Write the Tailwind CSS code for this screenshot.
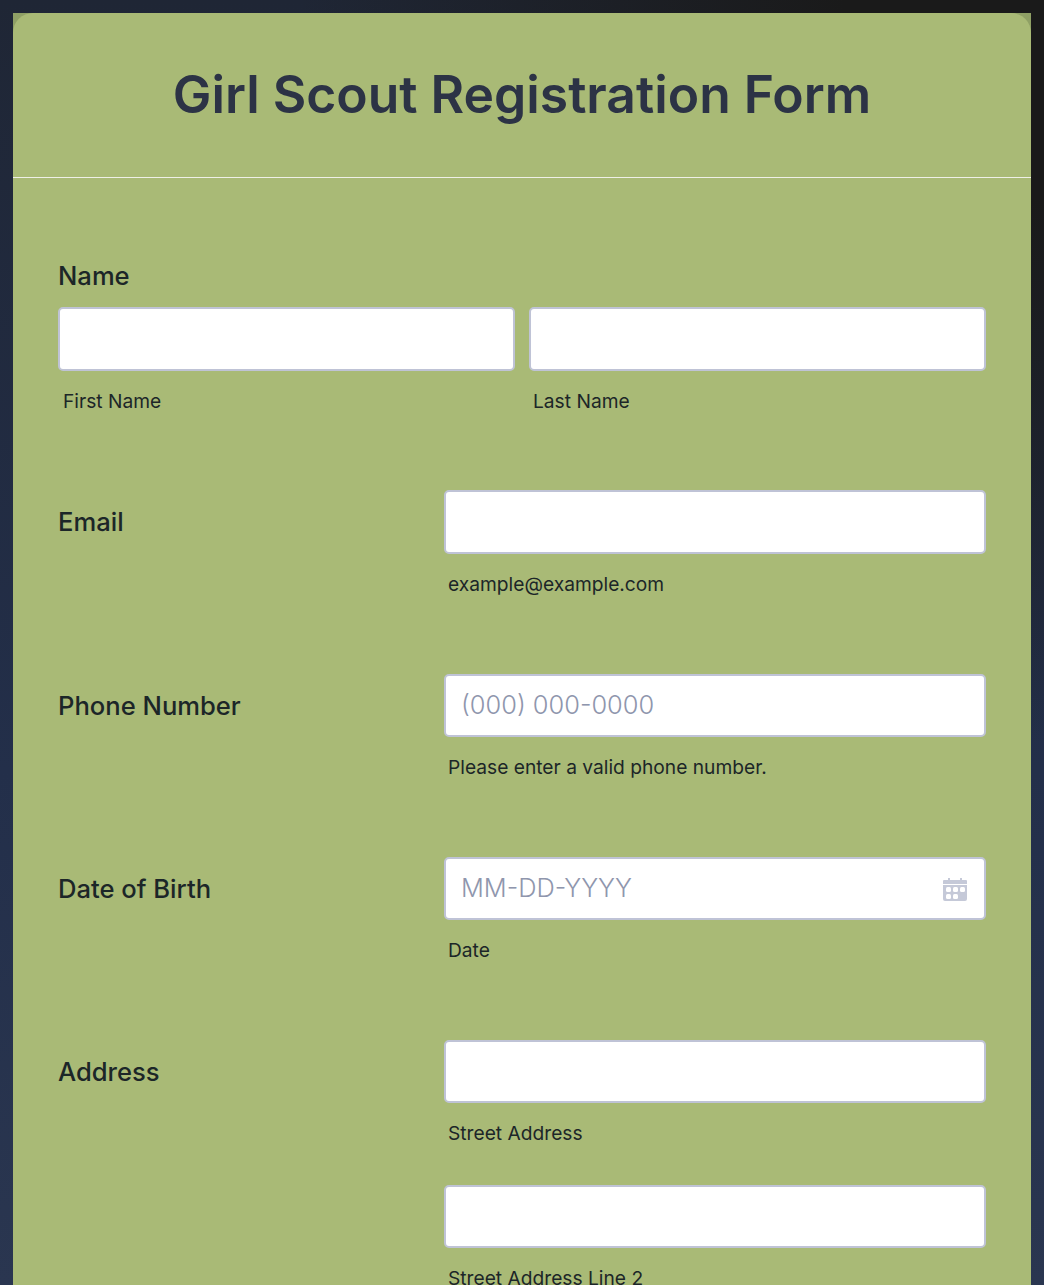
<!DOCTYPE html>
<html><head><meta charset="utf-8"><script src="https://cdn.jsdelivr.net/npm/@tailwindcss/browser@4"></script></head>
<body class="m-0 h-[1285px] overflow-hidden bg-[radial-gradient(circle_at_100%_0%,#1a1a1a_0,#1a1a1a_12%,transparent_45%),linear-gradient(to_bottom,#1f2635,#232f4a_60%,#2a3650)] font-['Inter',sans-serif]">
<div class="ml-[13px] mt-[13px] w-[1018px] h-[1300px] bg-[#8fa065]">
<div class="h-full rounded-t-[20px] bg-[#a9ba76]">
<header class="h-[165px] border-b border-[#eef0e6] flex items-center justify-center pb-[2px]">
<h1 class="text-[51.6px] leading-[60px] font-semibold text-[#2c3345] whitespace-nowrap">Girl Scout Registration Form</h1>
</header>
<main class="px-[45px] pt-[83px] text-[#1c2628]">
<section class="h-[229px]">
<div class="text-[25.6px] leading-[30px] font-medium mb-[16px]">Name</div>
<div class="grid grid-cols-2 gap-[14px]">
<div><div class="h-[64px] bg-white border-2 border-[#bfc3d6] rounded-[5px]"></div><div class="text-[19.2px] leading-[24px] mt-[18px] ml-[5px]">First Name</div></div>
<div><div class="h-[64px] bg-white border-2 border-[#bfc3d6] rounded-[5px]"></div><div class="text-[19.2px] leading-[24px] mt-[18px] ml-[4px]">Last Name</div></div>
</div>
</section>
<section class="flex h-[184px]">
<div class="w-[386px] pt-[17px] text-[25.6px] leading-[30px] font-medium">Email</div>
<div class="flex-1"><div class="h-[64px] bg-white border-2 border-[#bfc3d6] rounded-[5px]"></div><div class="text-[19.2px] leading-[24px] mt-[18px] ml-[4px]">example@example.com</div></div>
</section>
<section class="flex h-[183px]">
<div class="w-[386px] pt-[17px] text-[25.6px] leading-[30px] font-medium">Phone Number</div>
<div class="flex-1"><div class="h-[63px] bg-white border-2 border-[#bfc3d6] rounded-[5px] flex items-center px-[15px] text-[25.4px] font-light text-[#8f96ad]">(000) 000-0000</div><div class="text-[19.2px] leading-[24px] mt-[18px] ml-[4px]">Please enter a valid phone number.</div></div>
</section>
<section class="flex h-[183px]">
<div class="w-[386px] pt-[17px] text-[25.6px] leading-[30px] font-medium">Date of Birth</div>
<div class="flex-1"><div class="h-[63px] bg-white border-2 border-[#bfc3d6] rounded-[5px] flex items-center justify-between pl-[15px] pr-[16px] text-[25.4px] font-light text-[#8f96ad]"><span>MM-DD-YYYY</span>
<svg width="26" height="26" viewBox="0 0 26 26"><path fill="#c5c9d8" d="M1 5a1 1 0 0 1 1-1h4V2h2v2h10V2h2v2h4a1 1 0 0 1 1 1v3H1zM1 9h24v14a2 2 0 0 1-2 2H3a2 2 0 0 1-2-2z"/><g fill="#fff"><rect x="4" y="11" width="5" height="5" rx="1.5"/><rect x="11" y="11" width="5" height="5" rx="1.5"/><rect x="18" y="11" width="5" height="5" rx="1.5"/><rect x="4" y="18" width="5" height="5" rx="1.5"/><rect x="11" y="18" width="5" height="5" rx="1.5"/></g></svg></div><div class="text-[19.2px] leading-[24px] mt-[18px] ml-[4px]">Date</div></div>
</section>
<section class="flex">
<div class="w-[386px] pt-[17px] text-[25.6px] leading-[30px] font-medium">Address</div>
<div class="flex-1"><div class="h-[63px] bg-white border-2 border-[#bfc3d6] rounded-[5px]"></div><div class="text-[19.2px] leading-[24px] mt-[18px] ml-[4px]">Street Address</div>
<div class="h-[63px] bg-white border-2 border-[#bfc3d6] rounded-[5px] mt-[40px]"></div><div class="text-[19.2px] leading-[24px] mt-[18px] ml-[4px]">Street Address Line 2</div></div>
</section>
</main>
</div>
</div>
</body></html>
